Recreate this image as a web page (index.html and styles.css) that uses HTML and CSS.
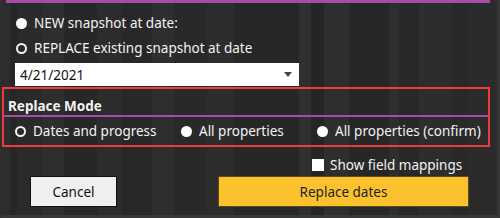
FILE: index.html
```html
<!DOCTYPE html>
<html lang="en">
<head>
  <meta charset="UTF-8" />
  <title>Replace snapshot</title>
  <link rel="stylesheet" href="styles.css">
</head>
<body>
  <div class="dialog">
    <div class="topbar"></div>

    <div class="choices">
      <div class="radio-row"><span class="radio filled"></span>NEW snapshot at date:</div>
      <div class="radio-row"><span class="radio ring"></span>REPLACE existing snapshot at date</div>
    </div>

    <div class="date-select">
      <span>4/21/2021</span>
      <span class="caret"></span>
    </div>

    <div class="mode-box">
      <div class="mode-title">Replace Mode</div>
      <div class="mode-rule"></div>
      <div class="mode-options">
        <div class="radio-row"><span class="radio ring"></span>Dates and progress</div>
        <div class="radio-row"><span class="radio filled"></span>All properties</div>
        <div class="radio-row"><span class="radio filled"></span>All properties (confirm)</div>
      </div>
    </div>

    <div class="mapping">
      <span class="check"></span>Show field mappings
    </div>

    <div class="actions">
      <button class="btn cancel">Cancel</button>
      <button class="btn primary">Replace dates</button>
    </div>
  </div>
</body>
</html>
```

FILE: styles.css
```css
html, body { margin: 0; padding: 0; }
body {
  font-family: "Noto Sans", "Open Sans", sans-serif;
  font-size: 13.5px;
  color: #f2f2f2;
  background: #2a2a2a;
}
.dialog {
  width: 500px; height: 218px; box-sizing: border-box;
  border-left: 2px solid #2f2f2f;
  border-right: 3px solid #353535;
  border-bottom: 3px solid #383838;
  background: linear-gradient(to right,
    #2d2d2d 0, #2d2d2d 8px, #262626 8px, #262626 15px,
    #2a2a2a 15px, #2a2a2a 40px, #2e2e2e 40px, #2e2e2e 62px,
    #272727 62px, #272727 95px, #2c2c2c 95px, #2c2c2c 120px,
    #282828 120px, #282828 150px, #2e2e2e 150px, #2e2e2e 172px,
    #292929 172px, #292929 205px, #2d2d2d 205px, #2d2d2d 232px,
    #272727 232px, #272727 297px, #303030 297px, #303030 309px,
    #252525 309px, #252525 322px, #2e2e2e 322px, #2e2e2e 347px,
    #272727 347px, #272727 387px, #2e2e2e 387px, #2e2e2e 397px,
    #282828 397px, #282828 417px, #2d2d2d 417px, #2d2d2d 450px,
    #292929 450px, #292929 467px, #2b2b2b 467px);
}
.topbar {
  height: 3px; background: #a64ca6;
  margin: 0 7px 0 4px;
}

.choices {
  display: flex; flex-direction: column; gap: 5px;
  padding: 10px 0 0 14px;
}
.radio-row {
  display: flex; align-items: center;
  height: 20px; white-space: nowrap;
}
.radio {
  width: 11px; height: 11px; border-radius: 50%;
  box-sizing: border-box; margin-right: 7px; flex: none;
}
.radio.filled { background: #fff; }
.radio.ring { border: 2px solid #f2f2f2; }

.date-select {
  display: flex; align-items: center; justify-content: space-between;
  margin: 5px 0 0 13px; width: 284px; height: 23px; box-sizing: border-box;
  background: #fff; color: #111; padding: 0 7px 0 5px;
}
.caret {
  width: 0; height: 0;
  border-left: 4px solid transparent; border-right: 4px solid transparent;
  border-top: 5px solid #444;
}

.mode-box {
  margin-top: 1px; width: 488px; box-sizing: border-box;
  border: 2px solid #ee3b3b;
}
.mode-title {
  font-weight: bold; line-height: 18px;
  padding: 8px 0 0 4px;
}
.mode-rule { height: 2px; background: #a64ca6; }
.mode-options {
  display: grid; grid-template-columns: 166px 136px auto;
  padding-left: 11px; height: 28px; align-items: center;
}

.mapping {
  display: flex; align-items: center; height: 18px;
  margin: 9px 0 0 310px;
}
.check {
  width: 12px; height: 12px; background: #fff;
  margin-right: 6px;
}

.actions {
  display: flex; gap: 101px; padding-left: 28px; margin-top: 2px;
}
.btn {
  height: 31px; font-family: inherit; font-size: 13.5px;
  border: 1px solid #111; padding: 0; cursor: pointer;
}
.cancel { width: 87px; background: #efefef; color: #111; }
.primary { width: 251px; background: #fcc22e; color: #222; border-color: #5a4a1c; }
```
